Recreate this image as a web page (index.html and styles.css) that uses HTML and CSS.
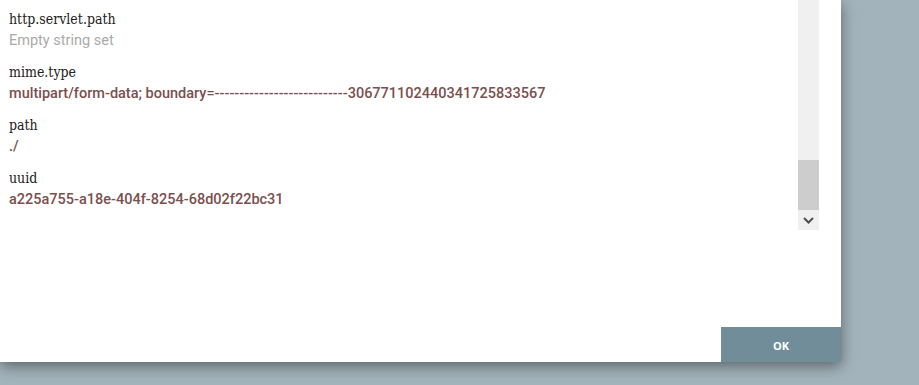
FILE: index.html
```html
<!DOCTYPE html>
<html>
<head>
<meta charset="utf-8">
<link rel="stylesheet" href="styles.css">
</head>
<body>
<div class="dialog">
  <div class="content">
    <div class="list">
      <div class="item">
        <div class="label">http.servlet.path</div>
        <div class="value empty">Empty string set</div>
      </div>
      <div class="item">
        <div class="label">mime.type</div>
        <div class="value">multipart/form-data; boundary=---------------------------306771102440341725833567</div>
      </div>
      <div class="item">
        <div class="label">path</div>
        <div class="value">./</div>
      </div>
      <div class="item">
        <div class="label">uuid</div>
        <div class="value">a225a755-a18e-404f-8254-68d02f22bc31</div>
      </div>
    </div>
    <div class="scrollbar">
      <div class="track"></div>
      <div class="thumb"></div>
      <div class="arrow">
        <svg width="11" height="7" viewBox="0 0 11 7"><path d="M1 1 L5.5 5.5 L10 1" fill="none" stroke="#505050" stroke-width="2"/></svg>
      </div>
    </div>
  </div>
  <div class="footer">
    <button class="ok">OK</button>
  </div>
</div>
</body>
</html>
```
FILE: styles.css
```css
html, body {
  margin: 0;
  padding: 0;
}
body {
  background: #a3b3bc;
  width: 919px;
  height: 385px;
  overflow: hidden;
}
.dialog {
  width: 841px;
  height: 362px;
  background: #ffffff;
  box-shadow: 0 4px 14px rgba(0, 0, 0, 0.45);
  display: flex;
  flex-direction: column;
  justify-content: space-between;
}
.content {
  display: flex;
  height: 230px;
  width: 819px;
}
.list {
  flex: 1;
  padding-left: 9px;
  padding-top: 9px;
}
.item {
  height: 53px;
}
.label {
  font-family: "DejaVu Serif", serif;
  font-stretch: condensed;
  font-size: 14px;
  color: #212121;
  line-height: 21px;
}
.value {
  font-family: Roboto, sans-serif;
  font-size: 14.5px;
  font-weight: 500;
  color: #7b4f4f;
  line-height: 22px;
}
.value.empty {
  color: #aaaaaa;
  font-weight: 400;
}
.scrollbar {
  width: 21px;
  display: flex;
  flex-direction: column;
  background: #f0f0f0;
}
.track {
  height: 160px;
}
.thumb {
  height: 50px;
  background: #cdcdcd;
}
.arrow {
  height: 20px;
  display: flex;
  align-items: center;
  justify-content: center;
}
.footer {
  display: flex;
  justify-content: flex-end;
}
.ok {
  width: 120px;
  height: 35px;
  border: none;
  margin: 0;
  padding-top: 2px;
  background: #718d99;
  color: #ffffff;
  font-family: "Open Sans", sans-serif;
  font-weight: 700;
  font-size: 11px;
}
```
